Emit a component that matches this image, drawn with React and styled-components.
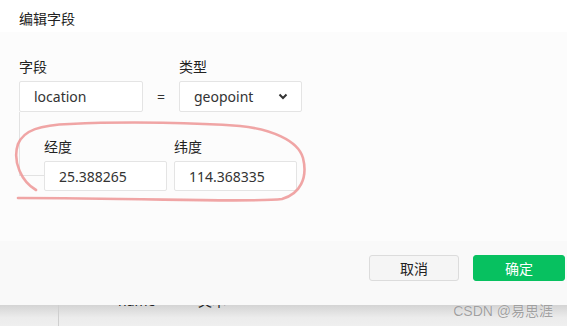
import styled, { createGlobalStyle } from 'styled-components';

const GlobalStyle = createGlobalStyle`
    html, body {
        margin: 0;
        padding: 0;
        background: #fcfcfc;
        overflow: hidden;
    }
    * {
        box-sizing: border-box;
    }
`;

const FONT = `"Segoe UI", "Noto Sans", "Noto Sans CJK SC", sans-serif`;

const Page = styled.div`
    position: relative;
    width: 567px;
    height: 326px;
    display: flex;
    flex-direction: column;
    font-family: ${FONT};
    color: #333;
`;

const Header = styled.div`
    height: 32px;
    padding: 9px 0 0 19px;
    background: #ffffff;
    font-size: 14px;
    line-height: 20px;
    color: #222;
`;

const Body = styled.div`
    position: relative;
    height: 209px;
    padding: 25px 0 0 19px;
    background: #fcfcfc;
`;

const Row = styled.div`
    display: flex;
    align-items: flex-end;
`;

const Field = styled.div`
    display: flex;
    flex-direction: column;
    width: ${p => p.$w}px;
`;

const Label = styled.div`
    font-size: 14px;
    line-height: 20px;
    margin-bottom: 4px;
    color: #222;
`;

const Box = styled.div`
    display: flex;
    align-items: center;
    justify-content: space-between;
    height: ${p => p.$h || 31}px;
    padding: 0 13px 0 14px;
    background: #ffffff;
    border: 1px solid #e4e4e4;
    border-radius: 2px;
    font-size: 14px;
    color: #333;
`;

const Equals = styled.div`
    width: 36px;
    height: 31px;
    line-height: 31px;
    text-align: center;
    font-size: 14px;
    color: #333;
`;

const Nested = styled.div`
    display: flex;
`;

const Connector = styled.div`
    width: 25px;
    height: 64px;
    border-left: 1px solid #e2e2e2;
    border-bottom: 1px solid #e2e2e2;
    flex-shrink: 0;
`;

const NestedFields = styled.div`
    display: flex;
    gap: 7px;
    padding-top: 25px;
`;

const Scribble = styled.svg`
    position: absolute;
    left: 0;
    top: 0;
    width: 567px;
    height: 209px;
    pointer-events: none;
`;

const Footer = styled.div`
    height: 64px;
    display: flex;
    justify-content: flex-end;
    align-items: flex-start;
    gap: 14px;
    padding: 14px 2px 0 0;
    background: #f9f9f9;
`;

const Button = styled.button`
    width: ${p => p.$w}px;
    height: 26px;
    border-radius: 3px;
    font-family: ${FONT};
    font-size: 14px;
    cursor: pointer;
    border: 1px solid ${p => (p.$primary ? '#07c160' : '#dcdcdc')};
    background: ${p => (p.$primary ? '#07c160' : '#f5f5f5')};
    color: ${p => (p.$primary ? '#ffffff' : '#222')};
`;

const Backdrop = styled.div`
    flex: 1;
    display: flex;
    overflow: hidden;
    background: linear-gradient(#d4d4d4, #ececec 60%, #efefef);
`;

const Sidebar = styled.div`
    width: 59px;
    border-right: 1px solid #cfcfcf;
`;

const BackdropText = styled.div`
    display: flex;
    margin-top: -14px;
    font-size: 14px;
    line-height: 20px;
    color: #222;
`;

const Cell = styled.span`
    margin-left: ${p => p.$ml}px;
`;

const Watermark = styled.div`
    position: absolute;
    right: 14px;
    bottom: 6px;
    font-family: "Liberation Sans", "Noto Sans CJK SC", sans-serif;
    font-size: 14px;
    color: #a0a0a0;
    text-shadow: 0 0 1px #fff;
`;

const Chevron = () => (
    <svg width="10" height="7" viewBox="0 0 10 7">
        <path d="M1.5 1.5 L5 5 L8.5 1.5" fill="none" stroke="#333" strokeWidth="2" />
    </svg>
);

const App = () => {
    return (
        <Page>
            <GlobalStyle />
            <Header>编辑字段</Header>
            <Body>
                <Row>
                    <Field $w={124}>
                        <Label>字段</Label>
                        <Box>location</Box>
                    </Field>
                    <Equals>=</Equals>
                    <Field $w={123}>
                        <Label>类型</Label>
                        <Box>
                            geopoint
                            <Chevron />
                        </Box>
                    </Field>
                </Row>
                <Nested>
                    <Connector />
                    <NestedFields>
                        <Field $w={123}>
                            <Label>经度</Label>
                            <Box $h={30}>25.388265</Box>
                        </Field>
                        <Field $w={123}>
                            <Label>纬度</Label>
                            <Box $h={30}>114.368335</Box>
                        </Field>
                    </NestedFields>
                </Nested>
                <Scribble viewBox="0 0 567 209">
                    <path
                        d="M36 158 C 22 150, 12 130, 18 112 C 24 98, 40 93, 70 92 C 130 89, 200 91, 240 94 C 270 97, 298 108, 303 126 C 308 146, 300 162, 282 167 C 250 171, 150 166, 18 166"
                        fill="none"
                        stroke="#ee9b9b"
                        strokeWidth="2.6"
                        strokeLinecap="round"
                        opacity="0.9"
                    />
                </Scribble>
            </Body>
            <Footer>
                <Button $w={90}>取消</Button>
                <Button $w={92} $primary>确定</Button>
            </Footer>
            <Backdrop>
                <Sidebar />
                <BackdropText>
                    <Cell $ml={59}>name</Cell>
                    <Cell $ml={16}>-</Cell>
                    <Cell $ml={22}>文本</Cell>
                </BackdropText>
            </Backdrop>
            <Watermark>CSDN @易思涯</Watermark>
        </Page>
    );
};

export default App;
